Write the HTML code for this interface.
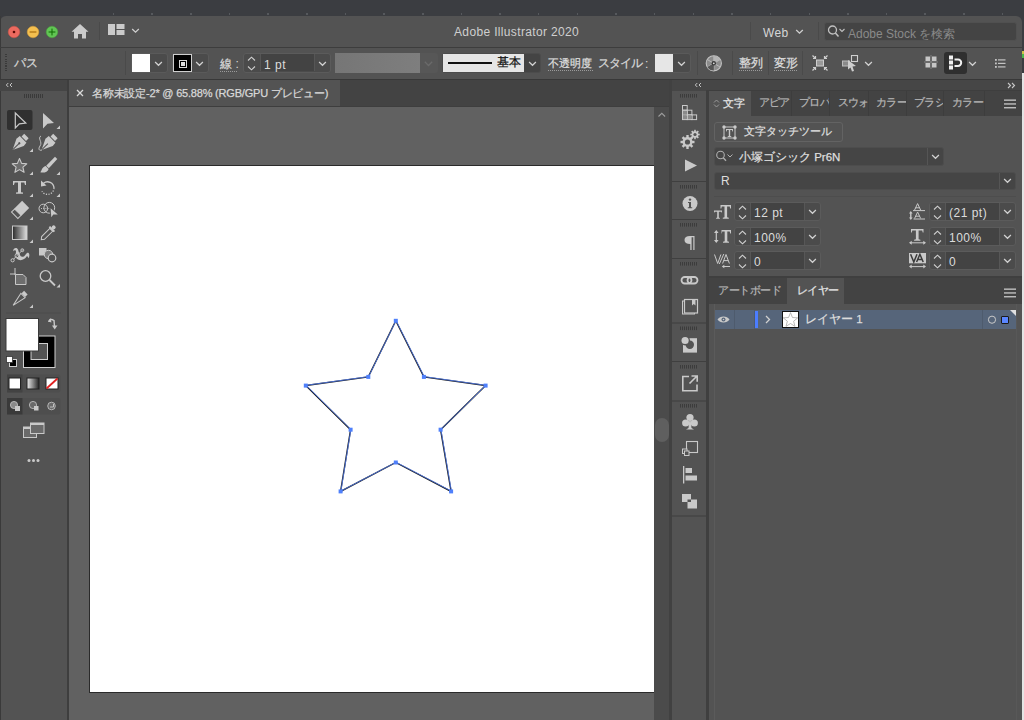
<!DOCTYPE html>
<html lang="ja">
<head>
<meta charset="utf-8">
<style>
*{box-sizing:border-box;margin:0;padding:0}
html,body{width:1024px;height:720px;overflow:hidden;background:#3b3d41;font-family:"Liberation Sans",sans-serif;color:#d4d4d4}
.a{position:absolute}
#rs1{left:1022px;top:0;width:2px;height:73px;background:#3b3d41}
#rs2{left:1022px;top:73px;width:2px;height:647px;background:#e4e4e4}
#win{left:0;top:16px;width:1022px;height:704px;background:#535353;border-radius:6px 6px 0 0;overflow:hidden}
.hl{height:1px;background:#3c3c3c}
.vl{width:1px;background:#474747}
.t{position:absolute;white-space:nowrap;line-height:1}
.j{-webkit-text-stroke:0.25px currentColor}
</style>
</head>
<body>
<div id="rs1" class="a"></div>
<div id="rs2" class="a"></div>
<div id="win" class="a"></div>
<div class="a" style="left:112.8px;top:13px;width:1.5px;height:2px;background:#56595d"></div><div class="a" style="left:151.4px;top:13px;width:1.5px;height:2px;background:#56595d"></div><div class="a" style="left:190.1px;top:13px;width:1.5px;height:2px;background:#56595d"></div><div class="a" style="left:228.8px;top:13px;width:1.5px;height:2px;background:#56595d"></div><div class="a" style="left:267.4px;top:13px;width:1.5px;height:2px;background:#56595d"></div><div class="a" style="left:306.1px;top:13px;width:1.5px;height:2px;background:#56595d"></div><div class="a" style="left:344.7px;top:13px;width:1.5px;height:2px;background:#56595d"></div><div class="a" style="left:383.4px;top:13px;width:1.5px;height:2px;background:#56595d"></div><div class="a" style="left:422.0px;top:13px;width:1.5px;height:2px;background:#56595d"></div><div class="a" style="left:460.6px;top:13px;width:1.5px;height:2px;background:#56595d"></div><div class="a" style="left:499.3px;top:13px;width:1.5px;height:2px;background:#56595d"></div><div class="a" style="left:537.9px;top:13px;width:1.5px;height:2px;background:#56595d"></div><div class="a" style="left:576.6px;top:13px;width:1.5px;height:2px;background:#56595d"></div><div class="a" style="left:615.2px;top:13px;width:1.5px;height:2px;background:#56595d"></div><div class="a" style="left:653.9px;top:13px;width:1.5px;height:2px;background:#56595d"></div><div class="a" style="left:692.5px;top:13px;width:1.5px;height:2px;background:#56595d"></div><div class="a" style="left:731.2px;top:13px;width:1.5px;height:2px;background:#56595d"></div><div class="a" style="left:769.8px;top:13px;width:1.5px;height:2px;background:#56595d"></div><div class="a" style="left:808.5px;top:13px;width:1.5px;height:2px;background:#56595d"></div><div class="a" style="left:847.1px;top:13px;width:1.5px;height:2px;background:#56595d"></div><div class="a" style="left:885.8px;top:13px;width:1.5px;height:2px;background:#56595d"></div><div class="a" style="left:924.4px;top:13px;width:1.5px;height:2px;background:#56595d"></div><div class="a" style="left:963.1px;top:13px;width:1.5px;height:2px;background:#56595d"></div><div class="a" style="left:1001.7px;top:13px;width:1.5px;height:2px;background:#56595d"></div><div class="a" style="left:1022px;top:51px;width:2px;height:3px;background:#c9c447"></div><div class="a" style="left:1022px;top:54px;width:2px;height:4px;background:#49b84a"></div>


<!-- title bar -->
<div class="a" style="left:0;top:16px;width:1px;height:704px;background:#3a3a3a"></div>
<div class="a" style="left:0;top:47px;width:1022px;height:1px;background:#3d3d3d"></div>
<div class="t" style="left:454px;top:26px;font-size:12px;letter-spacing:0.35px;color:#cfcfcf">Adobe Illustrator 2020</div>
<svg class="a" style="left:7px;top:25px" width="52" height="14" viewBox="0 0 52 14">
 <circle cx="7" cy="7" r="5.8" fill="#ec6a5f" stroke="#d25548" stroke-width="0.5"/>
 <circle cx="7" cy="7" r="1.3" fill="#5a0a05"/>
 <circle cx="26" cy="7" r="5.8" fill="#f4bf4f" stroke="#d9a03a" stroke-width="0.5"/>
 <rect x="22.6" y="6.5" width="6.8" height="1" fill="#9a5f00"/>
 <circle cx="45" cy="7" r="5.8" fill="#61c554" stroke="#4aa63c" stroke-width="0.5"/>
 <rect x="41.6" y="6.5" width="6.8" height="1" fill="#0e6a00"/>
 <rect x="44.5" y="3.6" width="1" height="6.8" fill="#0e6a00"/>
</svg>
<svg class="a" style="left:71px;top:23px" width="18" height="16" viewBox="0 0 18 16">
 <path d="M9 1 L17.5 8.8 L15 8.8 L15 15.5 L11 15.5 L11 11 L7 11 L7 15.5 L3 15.5 L3 8.8 L0.5 8.8 Z" fill="#cbcbcb"/>
</svg>
<div class="a" style="left:99px;top:22px;width:1px;height:18px;background:#4a4a4a"></div>
<svg class="a" style="left:108px;top:24px" width="17" height="12" viewBox="0 0 17 12">
 <rect x="0" y="0" width="7" height="11" fill="#cbcbcb"/>
 <rect x="8.5" y="0" width="8" height="5" fill="#cbcbcb"/>
 <rect x="8.5" y="6" width="8" height="5" fill="#cbcbcb"/>
</svg>
<svg class="a" style="left:131px;top:28px" width="9" height="6" viewBox="0 0 9 6"><polyline points="1.2,1 4.5,4.2 7.8,1" fill="none" stroke="#d0d0d0" stroke-width="1.2"/></svg>
<div class="a" style="left:750px;top:22px;width:1px;height:18px;background:#4a4a4a"></div>
<div class="t" style="left:763px;top:27px;font-size:12px;letter-spacing:0.4px;color:#d6d6d6">Web</div>
<svg class="a" style="left:795px;top:29px" width="9" height="6" viewBox="0 0 9 6"><polyline points="1.2,1 4.5,4.2 7.8,1" fill="none" stroke="#d0d0d0" stroke-width="1.3"/></svg>
<div class="a" style="left:818px;top:22px;width:1px;height:18px;background:#4a4a4a"></div>
<div class="a" style="left:824px;top:22px;width:193px;height:19px;background:#444444;border:1px solid #505050;border-radius:3px"></div>
<svg class="a" style="left:827px;top:25px" width="20" height="13" viewBox="0 0 20 13">
 <circle cx="5.5" cy="5" r="4" fill="none" stroke="#c0c0c0" stroke-width="1.3"/>
 <line x1="8.4" y1="8" x2="11.5" y2="11.5" stroke="#c0c0c0" stroke-width="1.5"/>
 <polyline points="12.5,4 15,6.5 17.5,4" fill="none" stroke="#c0c0c0" stroke-width="1.1"/>
</svg>
<div class="t" style="left:848px;top:28px;font-size:12px;color:#8a8a8a">Adobe Stock を検索</div>


<!-- control bar -->
<div class="a" style="left:5px;top:54px;width:2px;height:18px;background:repeating-linear-gradient(#3a3a3a 0 1px,transparent 1px 2.3px)"></div>
<div class="t j" style="left:14px;top:56.5px;font-size:12px;color:#d8d8d8">パス</div>
<div class="a" style="left:125px;top:51px;width:1px;height:24px;background:#4a4a4a"></div>
<div class="a" style="left:131px;top:53px;width:37px;height:20px;border:1px solid #5a5a5a;border-radius:3px;background:#4b4b4b"></div>
<div class="a" style="left:132px;top:54px;width:18px;height:18px;background:#fff"></div>
<svg class="a" style="left:154px;top:61px" width="9" height="6" viewBox="0 0 9 6"><polyline points="1.1,1 4.5,4.3 7.9,1" fill="none" stroke="#d2d2d2" stroke-width="1.2"/></svg>
<div class="a" style="left:172px;top:53px;width:37px;height:20px;border:1px solid #5a5a5a;border-radius:3px;background:#4b4b4b"></div>
<div class="a" style="left:173px;top:54px;width:19px;height:18px;background:#000;border:1px solid #cfcfcf"></div>
<div class="a" style="left:179px;top:60px;width:7.5px;height:7.5px;border:1.2px solid #d8d8d8;background:#000"></div>
<div class="a" style="left:181px;top:62px;width:3.5px;height:3.5px;background:#e0e0e0"></div>
<svg class="a" style="left:195px;top:61px" width="9" height="6" viewBox="0 0 9 6"><polyline points="1.1,1 4.5,4.3 7.9,1" fill="none" stroke="#d2d2d2" stroke-width="1.2"/></svg>
<div class="t j" style="left:220px;top:57.5px;font-size:12px;color:#d8d8d8">線</div><div class="t" style="left:235.5px;top:57.5px;font-size:12px;color:#d8d8d8">:</div>
<div class="a" style="left:220px;top:70.5px;width:18px;height:1px;background:repeating-linear-gradient(90deg,#9a9a9a 0 1px,transparent 1px 2px)"></div>
<div class="a" style="left:243px;top:53px;width:88px;height:20px;border:1px solid #5b5b5b;border-radius:3px;background:#4b4b4b"></div><div class="a" style="left:260px;top:54px;width:1px;height:17px;background:#565656"></div><div class="a" style="left:261px;top:54px;width:53px;height:17px;background:#434343"></div><div class="a" style="left:314px;top:54px;width:1px;height:17px;background:#565656"></div><svg class="a" style="left:247px;top:56px" width="9" height="16" viewBox="0 0 9 16"><polyline points="1,4.5 4.5,1.2 8,4.5" fill="none" stroke="#cfcfcf" stroke-width="1.1"/><polyline points="1,10.5 4.5,13.8 8,10.5" fill="none" stroke="#cfcfcf" stroke-width="1.1"/></svg><svg class="a" style="left:318px;top:61px" width="9" height="6" viewBox="0 0 9 6"><polyline points="1.1,1 4.5,4.3 7.9,1" fill="none" stroke="#d2d2d2" stroke-width="1.2"/></svg><div class="t" style="left:264px;top:58.5px;font-size:12px;letter-spacing:0.5px;color:#dcdcdc">1 pt</div>
<div class="a" style="left:335px;top:53px;width:103px;height:20px;border-radius:3px;background:#575757"></div>
<div class="a" style="left:335px;top:53px;width:85px;height:20px;background:linear-gradient(90deg,#767676,#7e7e7e)"></div>
<svg class="a" style="left:424px;top:61px" width="9" height="6" viewBox="0 0 9 6"><polyline points="0.8,0.8 4.5,4.5 8.2,0.8" fill="none" stroke="#6a6a6a" stroke-width="1.3"/></svg>
<div class="a" style="left:442px;top:53px;width:99px;height:20px;border:1px solid #4c4c4c;border-radius:3px;background:#444"></div>
<div class="a" style="left:443px;top:54px;width:81px;height:18px;background:#e6e6e6"></div>
<div class="a" style="left:448px;top:62px;width:44px;height:2px;background:#111"></div>
<div class="t j" style="left:497px;top:57px;font-size:11.5px;color:#111">基本</div>
<svg class="a" style="left:528px;top:61px" width="9" height="6" viewBox="0 0 9 6"><polyline points="1.1,1 4.5,4.3 7.9,1" fill="none" stroke="#d2d2d2" stroke-width="1.2"/></svg>
<div class="t j" style="left:548px;top:58px;font-size:11.3px;color:#dcdcdc">不透明度</div>
<div class="a" style="left:548px;top:70px;width:45px;height:1px;background:repeating-linear-gradient(90deg,#9a9a9a 0 1px,transparent 1px 2px)"></div>
<div class="t j" style="left:598px;top:58px;font-size:11.5px;letter-spacing:-0.9px;color:#d8d8d8">スタイル</div><div class="t" style="left:645px;top:58px;font-size:12px;color:#d8d8d8">:</div>
<div class="a" style="left:655px;top:53px;width:36px;height:20px;border:1px solid #5a5a5a;border-radius:3px;background:#4b4b4b"></div>
<div class="a" style="left:655px;top:54px;width:18px;height:18px;background:#e6e6e6"></div>
<svg class="a" style="left:677px;top:61px" width="9" height="6" viewBox="0 0 9 6"><polyline points="1.1,1 4.5,4.3 7.9,1" fill="none" stroke="#d2d2d2" stroke-width="1.2"/></svg>
<div class="a" style="left:697px;top:51px;width:1px;height:24px;background:#4a4a4a"></div>
<svg class="a" style="left:705px;top:55px" width="18" height="18" viewBox="0 0 18 18">
 <circle cx="8.8" cy="8.3" r="7.6" fill="#8c8c8c" stroke="#c4c4c4" stroke-width="1.1"/>
 <g stroke="#bdbdbd" stroke-width="0.9">
  <line x1="8.8" y1="8.3" x2="8.8" y2="1"/><line x1="8.8" y1="8.3" x2="15.2" y2="4.6"/><line x1="8.8" y1="8.3" x2="15.2" y2="12"/>
  <line x1="8.8" y1="8.3" x2="8.8" y2="15.6"/><line x1="8.8" y1="8.3" x2="2.4" y2="12"/><line x1="8.8" y1="8.3" x2="2.4" y2="4.6"/>
 </g>
 <path d="M8.8 8.3 L2.4 12 A7.4 7.4 0 0 0 8.8 15.6 Z" fill="#555"/>
 <path d="M8.8 8.3 L15.2 4.6 A7.4 7.4 0 0 0 8.8 1 Z" fill="#b5b5b5"/>
 <circle cx="8.8" cy="8.3" r="2.2" fill="#3a3a3a"/>
 <circle cx="8.8" cy="8.3" r="0.9" fill="#ddd"/>
</svg>
<div class="a" style="left:732px;top:51px;width:1px;height:24px;background:#4a4a4a"></div>
<div class="t j" style="left:739px;top:57.5px;font-size:11.5px;color:#dcdcdc">整列</div>
<div class="a" style="left:739px;top:70px;width:23px;height:1px;background:repeating-linear-gradient(90deg,#9a9a9a 0 1px,transparent 1px 2px)"></div>
<div class="a" style="left:768px;top:51px;width:1px;height:24px;background:#4a4a4a"></div>
<div class="t j" style="left:774px;top:57.5px;font-size:11.5px;color:#dcdcdc">変形</div>
<div class="a" style="left:774px;top:70px;width:23px;height:1px;background:repeating-linear-gradient(90deg,#9a9a9a 0 1px,transparent 1px 2px)"></div>
<div class="a" style="left:802px;top:51px;width:1px;height:24px;background:#4a4a4a"></div>
<svg class="a" style="left:812px;top:55px" width="16" height="16" viewBox="0 0 16 16">
 <rect x="4.5" y="5" width="7" height="6" fill="#9a9a9a" stroke="#cfcfcf" stroke-width="1"/>
 <g stroke="#cfcfcf" stroke-width="1.2" fill="none">
 <line x1="0.5" y1="0.5" x2="3.5" y2="3.5"/><polyline points="1,3.5 3.5,3.5 3.5,1"/>
 <line x1="15.5" y1="0.5" x2="12.5" y2="3.5"/><polyline points="15,3.5 12.5,3.5 12.5,1"/>
 <line x1="0.5" y1="15.5" x2="3.5" y2="12.5"/><polyline points="1,12.5 3.5,12.5 3.5,15"/>
 <line x1="15.5" y1="15.5" x2="12.5" y2="12.5"/><polyline points="15,12.5 12.5,12.5 12.5,15"/>
 </g>
</svg>
<svg class="a" style="left:842px;top:55px" width="17" height="17" viewBox="0 0 17 17">
 <rect x="0.5" y="6" width="7" height="5" fill="#8a8a8a" stroke="#bdbdbd" stroke-width="1"/>
 <rect x="9.5" y="0.5" width="6" height="6" fill="none" stroke="#cfcfcf" stroke-width="1.1"/>
 <path d="M6 5 L14 11 L10.5 11.5 L12 16 L10 16.5 L8.5 12.5 L6 14.5 Z" fill="#cfcfcf"/>
</svg>
<svg class="a" style="left:864px;top:61px" width="9" height="6" viewBox="0 0 9 6"><polyline points="1.1,1 4.5,4.3 7.9,1" fill="none" stroke="#d2d2d2" stroke-width="1.2"/></svg>
<svg class="a" style="left:924px;top:55px" width="14" height="14" viewBox="0 0 14 14">
 <rect x="1.5" y="1.5" width="4.5" height="4.5" fill="#c6c6c6"/><rect x="8" y="1.5" width="4.5" height="4.5" fill="#c6c6c6"/>
 <rect x="1.5" y="8" width="4.5" height="4.5" fill="#c6c6c6"/><rect x="8" y="8" width="4.5" height="4.5" fill="#c6c6c6"/>
 <line x1="0" y1="7" x2="14" y2="7" stroke="#9a9a9a" stroke-width="0.7"/><line x1="7" y1="0" x2="7" y2="14" stroke="#9a9a9a" stroke-width="0.7"/>
</svg>
<div class="a" style="left:944px;top:52px;width:23px;height:22px;border-radius:3px;background:#2f2f2f"></div>
<svg class="a" style="left:948px;top:55px" width="16" height="16" viewBox="0 0 16 16">
 <rect x="1" y="0.5" width="4" height="4" fill="#f0f0f0"/><rect x="1" y="5.5" width="4" height="4" fill="#f0f0f0"/><rect x="1" y="10.5" width="4" height="4" fill="#f0f0f0"/>
 <path d="M6.5 4.5 L10 4.5 A3.2 3.2 0 0 1 10 10.9 L6.5 10.9" fill="none" stroke="#f0f0f0" stroke-width="2"/>
</svg>
<svg class="a" style="left:968px;top:61px" width="9" height="6" viewBox="0 0 9 6"><polyline points="1.1,1 4.5,4.3 7.9,1" fill="none" stroke="#d2d2d2" stroke-width="1.2"/></svg>
<svg class="a" style="left:995px;top:59px" width="11" height="9" viewBox="0 0 11 9">
 <rect x="0" y="0" width="1.8" height="1.8" fill="#c4c4c4"/><rect x="0" y="3.5" width="1.8" height="1.8" fill="#c4c4c4"/><rect x="0" y="7" width="1.8" height="1.8" fill="#c4c4c4"/>
 <rect x="3" y="0.3" width="7.5" height="1.2" fill="#c4c4c4"/><rect x="3" y="3.8" width="7.5" height="1.2" fill="#c4c4c4"/><rect x="3" y="7.3" width="7.5" height="1.2" fill="#c4c4c4"/>
</svg>

<!-- control bar bottom -->
<div class="a" style="left:0;top:79px;width:1022px;height:1px;background:#383838"></div>

<!-- left panel -->
<div class="a" style="left:0;top:80px;width:67px;height:11px;background:#454545"></div>
<div class="a" style="left:67px;top:80px;width:2px;height:640px;background:#3e3e3e"></div>


<svg class="a" style="left:0;top:80px" width="67" height="640" viewBox="0 80 67 640">
 <g fill="none" stroke="#c4c4c4" stroke-width="1"><polyline points="8.3,83 6.3,85 8.3,87"/><polyline points="12,83 10,85 12,87"/></g>
 <g fill="#3a3a3a"><rect x="24" y="94" width="1" height="4"/><rect x="26" y="94" width="1" height="4"/><rect x="28" y="94" width="1" height="4"/><rect x="30" y="94" width="1" height="4"/><rect x="32" y="94" width="1" height="4"/><rect x="34" y="94" width="1" height="4"/><rect x="36" y="94" width="1" height="4"/><rect x="38" y="94" width="1" height="4"/><rect x="40" y="94" width="1" height="4"/><rect x="42" y="94" width="1" height="4"/></g>
 <rect x="7" y="110" width="25.5" height="20" rx="2" fill="#303030"/>
 <path d="M15.3 113 L15.3 128 L19.3 123.8 L25.8 123 Z" fill="none" stroke="#c9c9c9" stroke-width="1.2" stroke-linejoin="miter"/>
 <path d="M43 113 L43 128.5 L47.5 123.8 L54 123 Z" fill="#c9c9c9"/>
 <path d="M60 129 L60 125.5 L56.5 129 Z" fill="#c9c9c9"/>
 <!-- pen -->
 <g transform="translate(19.3,143.2) rotate(45) scale(1.12)">
  <rect x="-2.8" y="-9" width="5.6" height="3.3" fill="#c9c9c9"/>
  <path d="M-4.2 -4.8 L4.2 -4.8 L4.6 -1 L0 8.5 L-4.6 -1 Z" fill="#c9c9c9"/>
  <line x1="0" y1="0.5" x2="0" y2="8.5" stroke="#535353" stroke-width="0.9"/>
  <circle cx="0" cy="0" r="1" fill="#535353"/>
 </g>
 <path d="M33 152 L33 148.5 L29.5 152 Z" fill="#c9c9c9"/>
 <g transform="translate(48.3,143.2) rotate(45) scale(1.12)">
  <rect x="-2.8" y="-9" width="5.6" height="3.3" fill="#c9c9c9"/>
  <path d="M-4.2 -4.8 L4.2 -4.8 L4.6 -1 L0 8.5 L-4.6 -1 Z" fill="#c9c9c9"/>
  <line x1="0" y1="0.5" x2="0" y2="8.5" stroke="#535353" stroke-width="0.9"/>
 </g>
 <path d="M41 136 C37 138 43 142 40 146 C38 149 39 151 42 150" fill="none" stroke="#c9c9c9" stroke-width="0.9"/>
 <!-- star -->
 <path d="M19.5 158.5 L21.6 163.4 L26.8 163.8 L22.9 167.2 L24.1 172.3 L19.5 169.6 L14.9 172.3 L16.1 167.2 L12.2 163.8 L17.4 163.4 Z" fill="#6e6e6e" stroke="#c9c9c9" stroke-width="1.1" stroke-linejoin="round"/>
 <path d="M33 175 L33 171.5 L29.5 175 Z" fill="#c9c9c9"/>
 <!-- brush -->
 <path d="M55 156.8 L57.3 159 L48.8 168.2 L46.2 165.8 Z" fill="#c9c9c9"/>
 <path d="M45.7 166 L48.6 168.9 C48 172 44 173 40.3 172.3 C42 170.5 41.8 167 45.7 166 Z" fill="#c9c9c9"/>
 <path d="M60 175 L60 171.5 L56.5 175 Z" fill="#c9c9c9"/>
 <!-- type -->
 <path d="M13 181 L26 181 L26 185 L25 185 L24.3 182.6 L21 182.6 L21 192.2 L23 192.6 L23 193.8 L16 193.8 L16 192.6 L18 192.2 L18 182.6 L14.7 182.6 L14 185 L13 185 Z" fill="#c9c9c9"/>
 <path d="M33 197 L33 193.5 L29.5 197 Z" fill="#c9c9c9"/>
 <!-- rotate -->
 <path d="M54 188 A6.5 6.5 0 0 1 41.9 191.2" fill="none" stroke="#c9c9c9" stroke-width="1.2" stroke-dasharray="1.2 1.4"/>
 <path d="M43.5 183.2 A6.5 6.5 0 0 1 54 188" fill="none" stroke="#c9c9c9" stroke-width="1.3"/>
 <path d="M41 180.5 L41 186.5 L46.5 185.5 Z" fill="#c9c9c9"/>
 <path d="M60 197 L60 193.5 L56.5 197 Z" fill="#c9c9c9"/>
 <!-- eraser -->
 <g transform="translate(20,210) rotate(45)">
  <rect x="-5" y="-8" width="10" height="11" fill="#c9c9c9"/>
  <rect x="-4.5" y="3" width="9" height="4.5" fill="none" stroke="#c9c9c9" stroke-width="1"/>
 </g>
 <path d="M33 220 L33 216.5 L29.5 220 Z" fill="#c9c9c9"/>
 <!-- shape builder -->
 <circle cx="43.3" cy="208.5" r="4.3" fill="none" stroke="#c9c9c9" stroke-width="1"/>
 <circle cx="49.3" cy="207.8" r="5.4" fill="none" stroke="#c9c9c9" stroke-width="1"/>
 <line x1="41" y1="208.5" x2="50" y2="208.5" stroke="#c9c9c9" stroke-width="0.9" stroke-dasharray="1 1.2"/>
 <path d="M50.6 208.3 L51.3 217.3 L53.3 214.6 L57.8 214.4 Z" fill="#535353" stroke="#535353" stroke-width="1.6" stroke-linejoin="round"/>
 <path d="M50.6 208.3 L51.3 217.3 L53.3 214.6 L57.8 214.4 Z" fill="#c9c9c9"/>
 <!-- gradient -->
 <defs><linearGradient id="gr1" x1="0" x2="1"><stop offset="0" stop-color="#2a2a2a"/><stop offset="1" stop-color="#e0e0e0"/></linearGradient></defs>
 <rect x="12.5" y="226" width="14.5" height="13.5" fill="url(#gr1)" stroke="#c9c9c9" stroke-width="1"/>
 <path d="M33 243 L33 239.5 L29.5 243 Z" fill="#c9c9c9"/>
 <!-- eyedropper -->
 <g transform="translate(48,233) rotate(45)">
  <rect x="-2" y="-10" width="4" height="4" rx="2" fill="#c9c9c9"/>
  <rect x="-3.5" y="-6.5" width="7" height="2" fill="#c9c9c9"/>
  <path d="M-2 -4.5 L2 -4.5 L2 7 L0 9.5 L-2 7 Z" fill="none" stroke="#c9c9c9" stroke-width="1"/>
 </g>
 <!-- puppet warp -->
 <path d="M13.3 251.3 C12.8 248.8 15.5 247.3 17.2 248.6 C18.2 249.4 18.3 250.4 18.6 251.6 L20.5 256 C22 257.6 24.5 256.6 25.8 254.2 C26.8 252.4 28.6 252 29.2 254 C29.6 255.6 29.2 257.2 28.3 258.2 C28 256.5 27.3 255.5 26.6 256.6 C25 259.5 21.5 260.8 18.5 259.8 C16.2 259 15.2 256.8 15.6 254.5 C15.9 252.8 16.3 251.3 15.6 250.6 C14.8 250 14 250.5 13.3 251.3 Z" fill="#c9c9c9"/>
 <line x1="12.5" y1="260.3" x2="22.5" y2="250" stroke="#c9c9c9" stroke-width="1"/>
 <circle cx="12.6" cy="260.3" r="1.6" fill="#535353" stroke="#c9c9c9" stroke-width="1"/>
 <circle cx="16.9" cy="255.8" r="1.9" fill="#535353" stroke="#c9c9c9" stroke-width="0.9"/>
 <line x1="15.6" y1="257.1" x2="18.2" y2="254.5" stroke="#c9c9c9" stroke-width="0.8"/>
 <circle cx="22.3" cy="250.2" r="1.5" fill="#8a8a8a" stroke="#c9c9c9" stroke-width="0.8"/>
 <!-- blend -->
 <rect x="39" y="248" width="7.5" height="7.5" fill="#c9c9c9"/>
 <circle cx="48.5" cy="254.5" r="4.2" fill="#7a7a7a" stroke="#c9c9c9" stroke-width="1"/>
 <circle cx="52" cy="258" r="3.8" fill="#535353" stroke="#c9c9c9" stroke-width="1.2"/>
 <!-- artboard -->
 <line x1="15" y1="268" x2="15" y2="275" stroke="#c9c9c9" stroke-width="1"/>
 <line x1="10" y1="274" x2="16" y2="274" stroke="#c9c9c9" stroke-width="1"/>
 <path d="M15.5 274.5 L23 274.5 L26 277.5 L26 284.5 L15.5 284.5 Z" fill="#6e6e6e" stroke="#c9c9c9" stroke-width="1"/>
 <!-- zoom -->
 <circle cx="45.5" cy="276" r="5.3" fill="none" stroke="#c9c9c9" stroke-width="1.3"/>
 <line x1="49.5" y1="280" x2="55" y2="285.5" stroke="#c9c9c9" stroke-width="1.8"/>
 <path d="M60 287.5 L60 284.0 L56.5 287.5 Z" fill="#c9c9c9"/>
 <!-- pencil/shaper -->
 <g transform="translate(19.5,299) rotate(45)">
  <rect x="-2.5" y="-9" width="5" height="3.5" fill="#c9c9c9"/>
  <path d="M-3 -5 L3 -5 L0 9 Z" fill="none" stroke="#c9c9c9" stroke-width="1"/>
 </g>
 <path d="M33 308 L33 304.5 L29.5 308 Z" fill="#c9c9c9"/>
 <!-- separator -->
 <rect x="6" y="312.5" width="55" height="1" fill="#4d4d4d"/>
 <!-- swap arrows -->
 <path d="M49 322 C49 319.5 51 318.5 54 320.5 L54.5 326.5" fill="none" stroke="#c9c9c9" stroke-width="1.4"/>
 <path d="M48 321.5 L50.5 318 L51.5 322.5 Z" fill="#c9c9c9"/>
 <path d="M52 325.5 L57.5 325.5 L54.7 329.5 Z" fill="#c9c9c9"/>
 <!-- stroke swatch -->
 <rect x="23.5" y="336" width="31.5" height="31.5" fill="#000" stroke="#cfcfcf" stroke-width="1"/>
 <rect x="31" y="343.5" width="16.5" height="16" fill="#535353" stroke="#cfcfcf" stroke-width="1"/>
 <!-- fill swatch -->
 <rect x="6" y="318.5" width="32.5" height="32.5" fill="#fff" stroke="#3a3a3a" stroke-width="1"/>
 <!-- default fill/stroke -->
 <rect x="9.5" y="359.5" width="7" height="7" fill="#000" stroke="#cfcfcf" stroke-width="1"/>
 <rect x="6.5" y="356.5" width="6" height="6" fill="#fff" stroke="#333" stroke-width="0.8"/>
 <!-- color mode row -->
 <rect x="7" y="374.5" width="53.5" height="18" rx="2" fill="#4e4e4e"/>
 <rect x="7" y="374.5" width="15.5" height="18" fill="#434343"/>
 <rect x="9" y="378" width="11.5" height="11" fill="#fff" stroke="#222" stroke-width="1"/>
 <defs><linearGradient id="gr2" x1="0" x2="1"><stop offset="0" stop-color="#eee"/><stop offset="1" stop-color="#222"/></linearGradient></defs>
 <rect x="27" y="378" width="12" height="11" fill="url(#gr2)" stroke="#222" stroke-width="1"/>
 <rect x="46" y="378" width="12" height="11" fill="#fff" stroke="#222" stroke-width="1"/>
 <line x1="46.5" y1="388.5" x2="57.5" y2="378.5" stroke="#e02020" stroke-width="1.8"/>
 <!-- draw mode row -->
 <rect x="7" y="398" width="53.5" height="16.5" rx="2" fill="#4e4e4e"/>
 <rect x="7" y="398" width="15.5" height="16.5" fill="#3a3a3a"/>
 <circle cx="14" cy="405" r="3.6" fill="#8a8a8a" stroke="#c9c9c9" stroke-width="0.8"/>
 <rect x="15" y="406" width="5" height="5" fill="#c9c9c9"/>
 <circle cx="33" cy="405" r="3.6" fill="#6a6a6a" stroke="#c9c9c9" stroke-width="0.8"/>
 <rect x="34" y="406" width="4.5" height="4.5" fill="#c9c9c9"/>
 <circle cx="51.5" cy="406" r="3.8" fill="#6a6a6a" stroke="#c9c9c9" stroke-width="0.8"/>
 <path d="M50 407 L53.5 407 L53.5 404" fill="none" stroke="#c9c9c9" stroke-width="0.9"/>
 <!-- screen mode -->
 <rect x="23.5" y="427" width="13" height="10.5" fill="#6a6a6a" stroke="#c9c9c9" stroke-width="1"/>
 <rect x="23.5" y="427" width="13" height="2" fill="#c9c9c9"/>
 <rect x="30.5" y="423" width="13.5" height="10.5" fill="#6a6a6a" stroke="#c9c9c9" stroke-width="1"/>
 <rect x="30.5" y="423" width="13.5" height="2" fill="#c9c9c9"/>
 <!-- dots -->
 <circle cx="29" cy="460.5" r="1.5" fill="#c9c9c9"/><circle cx="33.5" cy="460.5" r="1.5" fill="#c9c9c9"/><circle cx="38" cy="460.5" r="1.5" fill="#c9c9c9"/>
</svg>

<!-- doc area -->
<div class="a" style="left:69px;top:80px;width:600px;height:26px;background:#434343"></div>
<div class="a" style="left:69px;top:80px;width:271px;height:26px;background:#535353"></div>
<div class="a" style="left:69px;top:106px;width:600px;height:1px;background:#3e3e3e"></div>
<div class="a" style="left:69px;top:107px;width:585px;height:613px;background:#616161"></div>
<div class="a" style="left:89px;top:165px;width:565px;height:528px;background:#fff;border:1px solid #2a2a2a;border-right:none"></div>
<div class="a" style="left:654px;top:107px;width:15px;height:613px;background:#4b4b4b"></div>
<div class="a" style="left:655px;top:418px;width:13.5px;height:23.5px;border-radius:7px;background:#5f5f5f"></div>
<div class="a" style="left:669px;top:80px;width:3px;height:640px;background:#414141"></div>


<svg class="a" style="left:76px;top:89px" width="8" height="8" viewBox="0 0 8 8"><path d="M1 1 L7 7 M7 1 L1 7" stroke="#dadada" stroke-width="1.3"/></svg>
<div class="t j" style="left:92px;top:87.5px;font-size:11px;letter-spacing:-0.2px;color:#d8d8d8">名称未設定-2* @ 65.88% (RGB/GPU プレビュー)</div>
<svg class="a" style="left:657px;top:112px" width="10" height="6" viewBox="0 0 10 6"><polyline points="1.5,4.5 4.8,1.3 8.1,4.5" fill="none" stroke="#9c9c9c" stroke-width="1.1"/></svg>
<svg class="a" style="left:290px;top:305px" width="210" height="200" viewBox="290 305 210 200">
 <path d="M395.8 320.8 L423.9 376.9 L485.6 385.6 L440.6 429.7 L451.1 491.4 L395.8 462.5 L340.6 491.4 L350.6 429.7 L305.8 385.6 L368.3 376.9 Z" fill="none" stroke="#1a1a1a" stroke-width="1.4"/>
 <path d="M395.8 320.8 L423.9 376.9 L485.6 385.6 L440.6 429.7 L451.1 491.4 L395.8 462.5 L340.6 491.4 L350.6 429.7 L305.8 385.6 L368.3 376.9 Z" fill="none" stroke="#4f7cf5" stroke-width="0.8" transform="translate(0.3,-0.3)"/>
 <g fill="#4f80fb">
 <rect x="393.8" y="318.8" width="4" height="4"/>
 <rect x="421.9" y="374.9" width="4" height="4"/>
 <rect x="483.6" y="383.6" width="4" height="4"/>
 <rect x="438.6" y="427.7" width="4" height="4"/>
 <rect x="449.1" y="489.4" width="4" height="4"/>
 <rect x="393.8" y="460.5" width="4" height="4"/>
 <rect x="338.6" y="489.4" width="4" height="4"/>
 <rect x="348.6" y="427.7" width="4" height="4"/>
 <rect x="303.8" y="383.6" width="4" height="4"/>
 <rect x="366.3" y="374.9" width="4" height="4"/>
 </g>
</svg>

<!-- icon panel -->

<svg class="a" style="left:672px;top:80px" width="34" height="640" viewBox="672 80 34 640">
 <rect x="672" y="80" width="34" height="640" fill="#3f3f3f"/>
 <rect x="672" y="80" width="34" height="11" fill="#464646"/>
 <g fill="none" stroke="#c4c4c4" stroke-width="1"><polyline points="697.3,83 695.3,85 697.3,87"/><polyline points="701,83 699,85 701,87"/></g>
 <rect x="672" y="91" width="34" height="90" fill="#535353"/><rect x="672" y="182" width="34" height="37" fill="#535353"/><rect x="672" y="220" width="34" height="38" fill="#535353"/><rect x="672" y="259" width="34" height="63.5" fill="#535353"/><rect x="672" y="323.5" width="34" height="37.5" fill="#535353"/><rect x="672" y="362" width="34" height="38.5" fill="#535353"/><rect x="672" y="401.5" width="34" height="114.0" fill="#535353"/>
 <rect x="672" y="516.5" width="34" height="204" fill="#535353"/>
 <rect x="680" y="94" width="1" height="3.6" fill="#3c3c3c"/><rect x="682" y="94" width="1" height="3.6" fill="#3c3c3c"/><rect x="684" y="94" width="1" height="3.6" fill="#3c3c3c"/><rect x="686" y="94" width="1" height="3.6" fill="#3c3c3c"/><rect x="688" y="94" width="1" height="3.6" fill="#3c3c3c"/><rect x="690" y="94" width="1" height="3.6" fill="#3c3c3c"/><rect x="692" y="94" width="1" height="3.6" fill="#3c3c3c"/><rect x="694" y="94" width="1" height="3.6" fill="#3c3c3c"/><rect x="696" y="94" width="1" height="3.6" fill="#3c3c3c"/><rect x="680" y="185" width="1" height="3.6" fill="#3c3c3c"/><rect x="682" y="185" width="1" height="3.6" fill="#3c3c3c"/><rect x="684" y="185" width="1" height="3.6" fill="#3c3c3c"/><rect x="686" y="185" width="1" height="3.6" fill="#3c3c3c"/><rect x="688" y="185" width="1" height="3.6" fill="#3c3c3c"/><rect x="690" y="185" width="1" height="3.6" fill="#3c3c3c"/><rect x="692" y="185" width="1" height="3.6" fill="#3c3c3c"/><rect x="694" y="185" width="1" height="3.6" fill="#3c3c3c"/><rect x="696" y="185" width="1" height="3.6" fill="#3c3c3c"/><rect x="680" y="223" width="1" height="3.6" fill="#3c3c3c"/><rect x="682" y="223" width="1" height="3.6" fill="#3c3c3c"/><rect x="684" y="223" width="1" height="3.6" fill="#3c3c3c"/><rect x="686" y="223" width="1" height="3.6" fill="#3c3c3c"/><rect x="688" y="223" width="1" height="3.6" fill="#3c3c3c"/><rect x="690" y="223" width="1" height="3.6" fill="#3c3c3c"/><rect x="692" y="223" width="1" height="3.6" fill="#3c3c3c"/><rect x="694" y="223" width="1" height="3.6" fill="#3c3c3c"/><rect x="696" y="223" width="1" height="3.6" fill="#3c3c3c"/><rect x="680" y="262" width="1" height="3.6" fill="#3c3c3c"/><rect x="682" y="262" width="1" height="3.6" fill="#3c3c3c"/><rect x="684" y="262" width="1" height="3.6" fill="#3c3c3c"/><rect x="686" y="262" width="1" height="3.6" fill="#3c3c3c"/><rect x="688" y="262" width="1" height="3.6" fill="#3c3c3c"/><rect x="690" y="262" width="1" height="3.6" fill="#3c3c3c"/><rect x="692" y="262" width="1" height="3.6" fill="#3c3c3c"/><rect x="694" y="262" width="1" height="3.6" fill="#3c3c3c"/><rect x="696" y="262" width="1" height="3.6" fill="#3c3c3c"/><rect x="680" y="326.5" width="1" height="3.6" fill="#3c3c3c"/><rect x="682" y="326.5" width="1" height="3.6" fill="#3c3c3c"/><rect x="684" y="326.5" width="1" height="3.6" fill="#3c3c3c"/><rect x="686" y="326.5" width="1" height="3.6" fill="#3c3c3c"/><rect x="688" y="326.5" width="1" height="3.6" fill="#3c3c3c"/><rect x="690" y="326.5" width="1" height="3.6" fill="#3c3c3c"/><rect x="692" y="326.5" width="1" height="3.6" fill="#3c3c3c"/><rect x="694" y="326.5" width="1" height="3.6" fill="#3c3c3c"/><rect x="696" y="326.5" width="1" height="3.6" fill="#3c3c3c"/><rect x="680" y="365" width="1" height="3.6" fill="#3c3c3c"/><rect x="682" y="365" width="1" height="3.6" fill="#3c3c3c"/><rect x="684" y="365" width="1" height="3.6" fill="#3c3c3c"/><rect x="686" y="365" width="1" height="3.6" fill="#3c3c3c"/><rect x="688" y="365" width="1" height="3.6" fill="#3c3c3c"/><rect x="690" y="365" width="1" height="3.6" fill="#3c3c3c"/><rect x="692" y="365" width="1" height="3.6" fill="#3c3c3c"/><rect x="694" y="365" width="1" height="3.6" fill="#3c3c3c"/><rect x="696" y="365" width="1" height="3.6" fill="#3c3c3c"/><rect x="680" y="404" width="1" height="3.6" fill="#3c3c3c"/><rect x="682" y="404" width="1" height="3.6" fill="#3c3c3c"/><rect x="684" y="404" width="1" height="3.6" fill="#3c3c3c"/><rect x="686" y="404" width="1" height="3.6" fill="#3c3c3c"/><rect x="688" y="404" width="1" height="3.6" fill="#3c3c3c"/><rect x="690" y="404" width="1" height="3.6" fill="#3c3c3c"/><rect x="692" y="404" width="1" height="3.6" fill="#3c3c3c"/><rect x="694" y="404" width="1" height="3.6" fill="#3c3c3c"/><rect x="696" y="404" width="1" height="3.6" fill="#3c3c3c"/>
 <!-- symbols icon -->
 <g fill="none" stroke="#c9c9c9" stroke-width="1">
  <rect x="682.5" y="105.5" width="4.7" height="4.7"/>
  <rect x="682.5" y="110.2" width="4.7" height="4.7"/><rect x="687.2" y="110.2" width="4.7" height="4.7"/>
  <rect x="682.5" y="114.9" width="4.7" height="4.7"/><rect x="687.2" y="114.9" width="4.7" height="4.7"/><rect x="691.9" y="114.9" width="4.7" height="4.7"/>
 </g>
 <g fill="#8a8a8a"><rect x="683" y="111" width="4" height="3.5"/><rect x="683" y="115.5" width="4" height="3.5"/><rect x="688" y="115.5" width="4" height="3.5"/></g>
 <!-- gears -->
 <g fill="#c9c9c9">
  <circle cx="687.5" cy="142" r="5"/>
  <rect x="686.3" y="135" width="2.4" height="14" transform="rotate(0 687.5 142)"/><rect x="686.3" y="135" width="2.4" height="14" transform="rotate(45 687.5 142)"/><rect x="686.3" y="135" width="2.4" height="14" transform="rotate(90 687.5 142)"/><rect x="686.3" y="135" width="2.4" height="14" transform="rotate(135 687.5 142)"/>
  <circle cx="695" cy="134.5" r="3.3"/>
  <rect x="694.2" y="129.8" width="1.6" height="9.4" transform="rotate(0 695 134.5)"/><rect x="694.2" y="129.8" width="1.6" height="9.4" transform="rotate(45 695 134.5)"/><rect x="694.2" y="129.8" width="1.6" height="9.4" transform="rotate(90 695 134.5)"/><rect x="694.2" y="129.8" width="1.6" height="9.4" transform="rotate(135 695 134.5)"/>
 </g>
 <circle cx="687.5" cy="142" r="2.6" fill="#535353"/>
 <circle cx="695" cy="134.5" r="1.6" fill="#535353"/>
 <!-- play -->
 <path d="M685 159.5 L697 165.5 L685 171.5 Z" fill="#c9c9c9"/>
 <!-- info -->
 <circle cx="690" cy="203.5" r="7.5" fill="#c9c9c9"/>
 <circle cx="690" cy="199.6" r="1.2" fill="#535353"/>
 <path d="M688 202 L691 202 L691 207.2 L692.2 207.2 L692.2 208.3 L687.8 208.3 L687.8 207.2 L689 207.2 L689 203 L688 203 Z" fill="#535353"/>
 <!-- pilcrow -->
 <path d="M690 236 L694.5 236 L694.5 250 L693.3 250 L693.3 237.3 L691.6 237.3 L691.6 250 L690.3 250 L690.3 244 C686.5 244 684.5 242.5 684.5 240 C684.5 237.5 686.5 236 690 236 Z" fill="#c9c9c9"/>
 <!-- link -->
 <g fill="none" stroke="#c9c9c9" stroke-width="1.8">
  <rect x="681.5" y="277" width="10" height="6.5" rx="3.25"/>
  <rect x="687.5" y="277" width="10" height="6.5" rx="3.25"/>
 </g>
 <!-- library -->
 <rect x="682.5" y="301" width="12" height="13" fill="none" stroke="#c9c9c9" stroke-width="1"/>
 <rect x="684.5" y="299.5" width="13" height="13.5" fill="#535353" stroke="#c9c9c9" stroke-width="1.2"/>
 <path d="M692 299.5 L695.5 299.5 L695.5 305.5 L693.75 304 L692 305.5 Z" fill="#c9c9c9"/>
 <!-- circle/square -->
 <rect x="683" y="338.2" width="14" height="14.4" fill="#c9c9c9"/>
 <circle cx="689.8" cy="344.8" r="4.2" fill="#535353"/>
 <circle cx="685.1" cy="340.5" r="4.9" fill="#535353"/>
 <circle cx="685.1" cy="340.5" r="3.6" fill="#c9c9c9"/>
 <!-- export -->
 <path d="M689 376.5 L682.8 376.5 L682.8 390.8 L697 390.8 L697 384.5" fill="none" stroke="#c9c9c9" stroke-width="1.6"/>
 <path d="M689.5 383.5 L696.5 376.5 M691.5 376 L697.2 376 L697.2 381.7" fill="none" stroke="#c9c9c9" stroke-width="1.6"/>
 <!-- club -->
 <circle cx="690" cy="417.5" r="3.6" fill="#c9c9c9"/>
 <circle cx="685.7" cy="423" r="3.6" fill="#c9c9c9"/>
 <circle cx="694.3" cy="423" r="3.6" fill="#c9c9c9"/>
 <path d="M689.2 421 L690.8 421 L691.5 428 L694 429.5 L686 429.5 L688.5 428 Z" fill="#c9c9c9"/>
 <!-- transform -->
 <rect x="686.5" y="441.5" width="11" height="11" fill="none" stroke="#c9c9c9" stroke-width="1.1"/>
 <rect x="682.5" y="449" width="4.5" height="4.5" fill="#535353" stroke="#c9c9c9" stroke-width="1"/>
 <rect x="684.5" y="451" width="4.5" height="4.5" fill="#535353" stroke="#c9c9c9" stroke-width="1"/>
 <!-- align -->
 <rect x="683" y="466" width="1.3" height="17.5" fill="#c9c9c9"/>
 <rect x="685.5" y="468" width="6.5" height="5" fill="#c9c9c9"/>
 <rect x="685.5" y="475.5" width="11.5" height="5" fill="#c9c9c9"/>
 <!-- pathfinder -->
 <rect x="682" y="494" width="9" height="8" fill="#c9c9c9"/>
 <rect x="687.5" y="499.5" width="9.5" height="9" fill="#c9c9c9"/>
 <rect x="687.5" y="499.5" width="3.5" height="2.5" fill="#535353"/>
</svg>

<div class="a" style="left:706px;top:90px;width:3px;height:630px;background:#3f3f3f"></div><div class="a" style="left:706px;top:80px;width:3px;height:10px;background:#464646"></div>


<!-- right panel -->
<div class="a" style="left:709px;top:80px;width:313px;height:11px;background:#464646"></div><div class="a" style="left:709px;top:90px;width:313px;height:1px;background:#3e3e3e"></div>
<svg class="a" style="left:1007px;top:82px" width="10" height="7" viewBox="0 0 10 7"><g fill="none" stroke="#c9c9c9" stroke-width="1.1"><polyline points="1,1 3.5,3.5 1,6"/><polyline points="5,1 7.5,3.5 5,6"/></g></svg>
<div class="a" style="left:709px;top:91px;width:313px;height:25px;background:#434343"></div>
<div class="a" style="left:709px;top:91px;width:42px;height:25px;background:#535353"></div>
<svg class="a" style="left:713px;top:99px" width="7" height="9" viewBox="0 0 7 9"><polyline points="1,3.5 3.5,1 6,3.5" fill="none" stroke="#9a9a9a" stroke-width="1"/><polyline points="1,5.5 3.5,8 6,5.5" fill="none" stroke="#9a9a9a" stroke-width="1"/></svg>
<div class="t j" style="left:723px;top:98px;font-size:11px;color:#e6e6e6">文字</div>
<div class="a" style="left:790.5px;top:91px;width:1px;height:25px;background:#3d3d3d"></div><div class="a" style="left:751px;top:91px;width:39.5px;height:25px;overflow:hidden"><div class="t j" style="left:7.5px;top:6px;font-size:11px;letter-spacing:-0.6px;color:#b4b4b4">アピア</div></div><div class="a" style="left:829px;top:91px;width:1px;height:25px;background:#3d3d3d"></div><div class="a" style="left:791.5px;top:91px;width:37.5px;height:25px;overflow:hidden"><div class="t j" style="left:7.5px;top:6px;font-size:11px;letter-spacing:-0.6px;color:#b4b4b4">プロパ</div></div><div class="a" style="left:867.5px;top:91px;width:1px;height:25px;background:#3d3d3d"></div><div class="a" style="left:830px;top:91px;width:37.5px;height:25px;overflow:hidden"><div class="t j" style="left:7.5px;top:6px;font-size:11px;letter-spacing:-0.6px;color:#b4b4b4">スウォ</div></div><div class="a" style="left:905.5px;top:91px;width:1px;height:25px;background:#3d3d3d"></div><div class="a" style="left:868.5px;top:91px;width:37.0px;height:25px;overflow:hidden"><div class="t j" style="left:7.5px;top:6px;font-size:11px;letter-spacing:-0.6px;color:#b4b4b4">カラー</div></div><div class="a" style="left:943.3px;top:91px;width:1px;height:25px;background:#3d3d3d"></div><div class="a" style="left:906.5px;top:91px;width:36.799999999999955px;height:25px;overflow:hidden"><div class="t j" style="left:7.5px;top:6px;font-size:11px;letter-spacing:-0.6px;color:#b4b4b4">ブラシ</div></div><div class="a" style="left:984px;top:91px;width:1px;height:25px;background:#3d3d3d"></div><div class="a" style="left:944.3px;top:91px;width:39.700000000000045px;height:25px;overflow:hidden"><div class="t j" style="left:7.5px;top:6px;font-size:11px;letter-spacing:-0.6px;color:#b4b4b4">カラー</div></div>
<svg class="a" style="left:1004px;top:99px" width="12" height="10" viewBox="0 0 12 10"><g fill="#c9c9c9"><rect x="0" y="0.5" width="12" height="1.3"/><rect x="0" y="4.3" width="12" height="1.3"/><rect x="0" y="8.1" width="12" height="1.3"/></g></svg>

<div class="a" style="left:714px;top:122px;width:129px;height:20px;border:1px solid #636363;border-radius:3px"></div>
<svg class="a" style="left:721px;top:124px" width="17" height="17" viewBox="0 0 17 17">
 <rect x="3" y="3" width="11" height="11" fill="none" stroke="#c9c9c9" stroke-width="1"/>
 <circle cx="3" cy="3" r="1.7" fill="#c9c9c9"/><circle cx="14" cy="3" r="1.7" fill="#c9c9c9"/><circle cx="3" cy="14" r="1.7" fill="#c9c9c9"/><circle cx="14" cy="14" r="1.7" fill="#c9c9c9"/>
 <path d="M5 5 L12 5 L12 7.5 L11.4 7.5 L11 6 L9.2 6 L9.2 12 L10.3 12.3 L10.3 13 L6.7 13 L6.7 12.3 L7.8 12 L7.8 6 L6 6 L5.6 7.5 L5 7.5 Z" fill="#c9c9c9"/>
</svg>
<div class="t j" style="left:744px;top:126px;font-size:11px;color:#dedede">文字タッチツール</div>

<div class="a" style="left:714px;top:147px;width:230px;height:19px;border:1px solid #4d4d4d;border-radius:3px;background:#454545"></div>
<div class="a" style="left:927px;top:148px;width:1px;height:17px;background:#555"></div>
<svg class="a" style="left:715px;top:150px" width="20" height="13" viewBox="0 0 20 13">
 <circle cx="5.5" cy="5" r="3.8" fill="none" stroke="#b0b0b0" stroke-width="1.1"/>
 <line x1="8.2" y1="7.8" x2="11" y2="10.8" stroke="#b0b0b0" stroke-width="1.3"/>
 <polyline points="12.5,4.5 15,7 17.5,4.5" fill="none" stroke="#b0b0b0" stroke-width="1"/>
</svg>
<div class="t j" style="left:739px;top:151.5px;font-size:11.5px;color:#dedede">小塚ゴシック Pr6N</div>
<svg class="a" style="left:931px;top:154px" width="9" height="6" viewBox="0 0 9 6"><polyline points="1.1,1 4.5,4.3 7.9,1" fill="none" stroke="#d2d2d2" stroke-width="1.2"/></svg>
<div class="a" style="left:714px;top:172px;width:302px;height:18px;border:1px solid #4d4d4d;border-radius:3px;background:#454545"></div>
<div class="a" style="left:999px;top:173px;width:1px;height:16px;background:#555"></div>
<div class="t" style="left:721px;top:175px;font-size:12px;color:#dedede">R</div>
<svg class="a" style="left:1003px;top:178px" width="9" height="6" viewBox="0 0 9 6"><polyline points="1.1,1 4.5,4.3 7.9,1" fill="none" stroke="#d2d2d2" stroke-width="1.2"/></svg><div class="a" style="left:734px;top:202px;width:87px;height:19px;border:1px solid #5b5b5b;border-radius:3px;background:#4b4b4b"></div><div class="a" style="left:750px;top:203px;width:1px;height:17px;background:#575757"></div><div class="a" style="left:751px;top:203px;width:53px;height:17px;background:#434343"></div><div class="a" style="left:804px;top:203px;width:1px;height:17px;background:#575757"></div><svg class="a" style="left:738px;top:205px" width="9" height="16" viewBox="0 0 9 16"><polyline points="1,4.5 4.5,1.2 8,4.5" fill="none" stroke="#cfcfcf" stroke-width="1.1"/><polyline points="1,10.5 4.5,13.8 8,10.5" fill="none" stroke="#cfcfcf" stroke-width="1.1"/></svg><svg class="a" style="left:808px;top:209px" width="9" height="6" viewBox="0 0 9 6"><polyline points="1.1,1 4.5,4.3 7.9,1" fill="none" stroke="#d2d2d2" stroke-width="1.2"/></svg><div class="t" style="left:754px;top:207px;font-size:12px;letter-spacing:0.5px;color:#dcdcdc">12 pt</div><div class="a" style="left:734px;top:227px;width:87px;height:19px;border:1px solid #5b5b5b;border-radius:3px;background:#4b4b4b"></div><div class="a" style="left:750px;top:228px;width:1px;height:17px;background:#575757"></div><div class="a" style="left:751px;top:228px;width:53px;height:17px;background:#434343"></div><div class="a" style="left:804px;top:228px;width:1px;height:17px;background:#575757"></div><svg class="a" style="left:738px;top:230px" width="9" height="16" viewBox="0 0 9 16"><polyline points="1,4.5 4.5,1.2 8,4.5" fill="none" stroke="#cfcfcf" stroke-width="1.1"/><polyline points="1,10.5 4.5,13.8 8,10.5" fill="none" stroke="#cfcfcf" stroke-width="1.1"/></svg><svg class="a" style="left:808px;top:234px" width="9" height="6" viewBox="0 0 9 6"><polyline points="1.1,1 4.5,4.3 7.9,1" fill="none" stroke="#d2d2d2" stroke-width="1.2"/></svg><div class="t" style="left:754px;top:232px;font-size:12px;letter-spacing:0.5px;color:#dcdcdc">100%</div><div class="a" style="left:734px;top:251px;width:87px;height:19px;border:1px solid #5b5b5b;border-radius:3px;background:#4b4b4b"></div><div class="a" style="left:750px;top:252px;width:1px;height:17px;background:#575757"></div><div class="a" style="left:751px;top:252px;width:53px;height:17px;background:#434343"></div><div class="a" style="left:804px;top:252px;width:1px;height:17px;background:#575757"></div><svg class="a" style="left:738px;top:254px" width="9" height="16" viewBox="0 0 9 16"><polyline points="1,4.5 4.5,1.2 8,4.5" fill="none" stroke="#cfcfcf" stroke-width="1.1"/><polyline points="1,10.5 4.5,13.8 8,10.5" fill="none" stroke="#cfcfcf" stroke-width="1.1"/></svg><svg class="a" style="left:808px;top:258px" width="9" height="6" viewBox="0 0 9 6"><polyline points="1.1,1 4.5,4.3 7.9,1" fill="none" stroke="#d2d2d2" stroke-width="1.2"/></svg><div class="t" style="left:754px;top:256px;font-size:12px;letter-spacing:0.5px;color:#dcdcdc">0</div><div class="a" style="left:929px;top:202px;width:87px;height:19px;border:1px solid #5b5b5b;border-radius:3px;background:#4b4b4b"></div><div class="a" style="left:945px;top:203px;width:1px;height:17px;background:#575757"></div><div class="a" style="left:946px;top:203px;width:53px;height:17px;background:#434343"></div><div class="a" style="left:999px;top:203px;width:1px;height:17px;background:#575757"></div><svg class="a" style="left:933px;top:205px" width="9" height="16" viewBox="0 0 9 16"><polyline points="1,4.5 4.5,1.2 8,4.5" fill="none" stroke="#cfcfcf" stroke-width="1.1"/><polyline points="1,10.5 4.5,13.8 8,10.5" fill="none" stroke="#cfcfcf" stroke-width="1.1"/></svg><svg class="a" style="left:1003px;top:209px" width="9" height="6" viewBox="0 0 9 6"><polyline points="1.1,1 4.5,4.3 7.9,1" fill="none" stroke="#d2d2d2" stroke-width="1.2"/></svg><div class="t" style="left:949px;top:207px;font-size:12px;letter-spacing:0.5px;color:#dcdcdc">(21 pt)</div><div class="a" style="left:929px;top:227px;width:87px;height:19px;border:1px solid #5b5b5b;border-radius:3px;background:#4b4b4b"></div><div class="a" style="left:945px;top:228px;width:1px;height:17px;background:#575757"></div><div class="a" style="left:946px;top:228px;width:53px;height:17px;background:#434343"></div><div class="a" style="left:999px;top:228px;width:1px;height:17px;background:#575757"></div><svg class="a" style="left:933px;top:230px" width="9" height="16" viewBox="0 0 9 16"><polyline points="1,4.5 4.5,1.2 8,4.5" fill="none" stroke="#cfcfcf" stroke-width="1.1"/><polyline points="1,10.5 4.5,13.8 8,10.5" fill="none" stroke="#cfcfcf" stroke-width="1.1"/></svg><svg class="a" style="left:1003px;top:234px" width="9" height="6" viewBox="0 0 9 6"><polyline points="1.1,1 4.5,4.3 7.9,1" fill="none" stroke="#d2d2d2" stroke-width="1.2"/></svg><div class="t" style="left:949px;top:232px;font-size:12px;letter-spacing:0.5px;color:#dcdcdc">100%</div><div class="a" style="left:929px;top:251px;width:87px;height:19px;border:1px solid #5b5b5b;border-radius:3px;background:#4b4b4b"></div><div class="a" style="left:945px;top:252px;width:1px;height:17px;background:#575757"></div><div class="a" style="left:946px;top:252px;width:53px;height:17px;background:#434343"></div><div class="a" style="left:999px;top:252px;width:1px;height:17px;background:#575757"></div><svg class="a" style="left:933px;top:254px" width="9" height="16" viewBox="0 0 9 16"><polyline points="1,4.5 4.5,1.2 8,4.5" fill="none" stroke="#cfcfcf" stroke-width="1.1"/><polyline points="1,10.5 4.5,13.8 8,10.5" fill="none" stroke="#cfcfcf" stroke-width="1.1"/></svg><svg class="a" style="left:1003px;top:258px" width="9" height="6" viewBox="0 0 9 6"><polyline points="1.1,1 4.5,4.3 7.9,1" fill="none" stroke="#d2d2d2" stroke-width="1.2"/></svg><div class="t" style="left:949px;top:256px;font-size:12px;letter-spacing:0.5px;color:#dcdcdc">0</div>
<svg class="a" style="left:712px;top:203px" width="20" height="70" viewBox="712 203 20 70">
 <path d="M720.5 205 L731 205 L731 208.5 L730.2 208.5 L729.7 206.5 L727.1 206.5 L727.1 217.3 L728.8 217.7 L728.8 218.8 L722.8 218.8 L722.8 217.7 L724.5 217.3 L724.5 206.5 L721.8 206.5 L721.3 208.5 L720.5 208.5 Z" fill="#c9c9c9"/>
 <path d="M714 210.5 L722 210.5 L722 212.6 L721.5 212.6 L721.2 211.7 L718.8 211.7 L718.8 217.6 L719.9 217.9 L719.9 218.7 L716.1 218.7 L716.1 217.9 L717.2 217.6 L717.2 211.7 L714.8 211.7 L714.5 212.6 L714 212.6 Z" fill="#c9c9c9"/>
 <path d="M721.5 230 L731 230 L731 233.5 L730.2 233.5 L729.7 231.5 L727.3 231.5 L727.3 241.3 L729 241.7 L729 242.8 L723 242.8 L723 241.7 L724.7 241.3 L724.7 231.5 L722.3 231.5 L721.8 233.5 L721.5 233.5 Z" fill="#c9c9c9"/>
 <line x1="716.3" y1="231.5" x2="716.3" y2="241.5" stroke="#c9c9c9" stroke-width="1.2"/>
 <path d="M714 233 L716.3 230 L718.6 233 Z M714 240 L716.3 243 L718.6 240 Z" fill="#c9c9c9"/>
 <g fill="none" stroke="#c9c9c9" stroke-width="1">
  <path d="M714.5 254.5 L717.7 263.5 L720.9 254.5"/>
  <path d="M719.3 264 L723.8 254"/>
  <path d="M722.6 263.5 L726 254.5 L729.4 263.5 M723.8 260.6 L728.2 260.6"/>
  <path d="M723.5 266.5 L730 266.5"/>
 </g>
 <path d="M721.8 266.5 L724.3 264.7 L724.3 268.3 Z" fill="#c9c9c9"/>
</svg>
<svg class="a" style="left:907px;top:203px" width="20" height="70" viewBox="907 203 20 70">
 <g fill="none" stroke="#c9c9c9" stroke-width="1">
  <path d="M914.6 210 L917.6 203.6 L920.6 210 M915.6 207.8 L919.6 207.8"/>
  <path d="M913 210.6 L925 210.6"/>
  <path d="M914.6 218.4 L917.6 212 L920.6 218.4 M915.6 216.2 L919.6 216.2"/>
  <path d="M913.5 219 L925 219"/>
 </g>
 <line x1="910.8" y1="213" x2="910.8" y2="218" stroke="#c9c9c9" stroke-width="1.4"/>
 <path d="M909 213.5 L910.8 211 L912.6 213.5 Z M909 217.5 L910.8 220 L912.6 217.5 Z" fill="#c9c9c9"/>
 <path d="M911 229 L923.5 229 L923.5 232.5 L922.7 232.5 L922.2 230.5 L918.6 230.5 L918.6 239.3 L920.4 239.7 L920.4 240.8 L914.1 240.8 L914.1 239.7 L915.9 239.3 L915.9 230.5 L912.3 230.5 L911.8 232.5 L911 232.5 Z" fill="#c9c9c9"/>
 <line x1="910.5" y1="242.8" x2="924.5" y2="242.8" stroke="#c9c9c9" stroke-width="1"/>
 <path d="M909 242.8 L911.7 240.8 L911.7 244.8 Z M926 242.8 L923.3 240.8 L923.3 244.8 Z" fill="#c9c9c9"/>
 <rect x="909" y="253" width="17" height="10.3" fill="#c9c9c9"/>
 <g fill="none" stroke="#3a3a3a" stroke-width="1.5">
  <path d="M910.6 254.3 L913.8 262 L917 254.3"/>
  <path d="M916.6 262 L919.9 254.3 L923.2 262 M917.9 259.6 L921.9 259.6"/>
 </g>
 <line x1="910.5" y1="266.6" x2="924.5" y2="266.6" stroke="#c9c9c9" stroke-width="1"/>
 <path d="M909 266.6 L911.7 264.6 L911.7 268.6 Z M926 266.6 L923.3 264.6 L923.3 268.6 Z" fill="#c9c9c9"/>
</svg>


<!-- char panel separator -->
<div class="a" style="left:714px;top:196px;width:302px;height:1px;background:#4d4d4d"></div>
<!-- layers panel -->
<div class="a" style="left:709px;top:276px;width:313px;height:2px;background:#3f3f3f"></div>
<div class="a" style="left:709px;top:278px;width:313px;height:26px;background:#434343"></div>
<div class="a" style="left:787px;top:278px;width:57px;height:26px;background:#535353"></div>
<div class="t j" style="left:718px;top:285px;font-size:10.5px;letter-spacing:-0.4px;color:#b4b4b4">アートボード</div>
<div class="t j" style="left:797px;top:285px;font-size:11px;letter-spacing:-0.6px;color:#e2e2e2">レイヤー</div>
<svg class="a" style="left:1004px;top:288px" width="12" height="10" viewBox="0 0 12 10"><g fill="#c9c9c9"><rect x="0" y="0.5" width="12" height="1.3"/><rect x="0" y="4.3" width="12" height="1.3"/><rect x="0" y="8.1" width="12" height="1.3"/></g></svg>
<div class="a" style="left:714px;top:304px;width:1px;height:416px;background:#5b5b5b"></div><div class="a" style="left:1016px;top:304px;width:1px;height:416px;background:#585858"></div>
<div class="a" style="left:715px;top:310px;width:301px;height:19px;background:#56657a"></div>
<div class="a" style="left:733.5px;top:310px;width:1px;height:19px;background:#4e5b6d"></div>
<div class="a" style="left:754px;top:310px;width:1px;height:19px;background:#4e5b6d"></div>
<div class="a" style="left:755px;top:311px;width:3px;height:17px;background:#4b7dff"></div>
<svg class="a" style="left:717px;top:315px" width="13" height="9" viewBox="0 0 13 9">
 <path d="M0.5 4.5 C3 0.5 10 0.5 12.5 4.5 C10 8.5 3 8.5 0.5 4.5 Z" fill="#c9c9c9"/>
 <circle cx="6.5" cy="4.5" r="2" fill="#56657a"/>
 <circle cx="6.5" cy="4.5" r="0.8" fill="#c9c9c9"/>
</svg>
<svg class="a" style="left:765px;top:315px" width="6" height="9" viewBox="0 0 6 9"><polyline points="1,1 4.5,4.5 1,8" fill="none" stroke="#d0d0d0" stroke-width="1.3"/></svg>
<div class="a" style="left:782px;top:311px;width:17px;height:17px;background:#fff;border:1px solid #111"></div>
<svg class="a" style="left:783px;top:312px" width="15" height="15" viewBox="0 0 15 15">
 <path d="M7.50 0.60 L9.44 5.53 L14.73 5.85 L10.64 9.22 L11.97 14.35 L7.50 11.50 L3.03 14.35 L4.36 9.22 L0.27 5.85 L5.56 5.53 Z" fill="none" stroke="#a8a8a8" stroke-width="0.8"/>
</svg>
<div class="t j" style="left:805px;top:314px;font-size:11.5px;color:#dcdcdc">レイヤー 1</div>
<div class="a" style="left:982px;top:310px;width:1px;height:19px;background:#4e5b6d"></div><svg class="a" style="left:987px;top:315px" width="10" height="10" viewBox="0 0 10 10"><circle cx="5" cy="4.7" r="3.6" fill="none" stroke="#c9c9c9" stroke-width="1"/></svg>
<div class="a" style="left:1001px;top:316px;width:8px;height:8px;background:#5a86ff;border:1.2px solid #1a1a1a;border-radius:1px"></div>
<svg class="a" style="left:1010px;top:310px" width="6" height="6" viewBox="0 0 6 6"><path d="M0 0 L6 0 L6 6 Z" fill="#e0e0e0"/></svg>

</body>
</html>
